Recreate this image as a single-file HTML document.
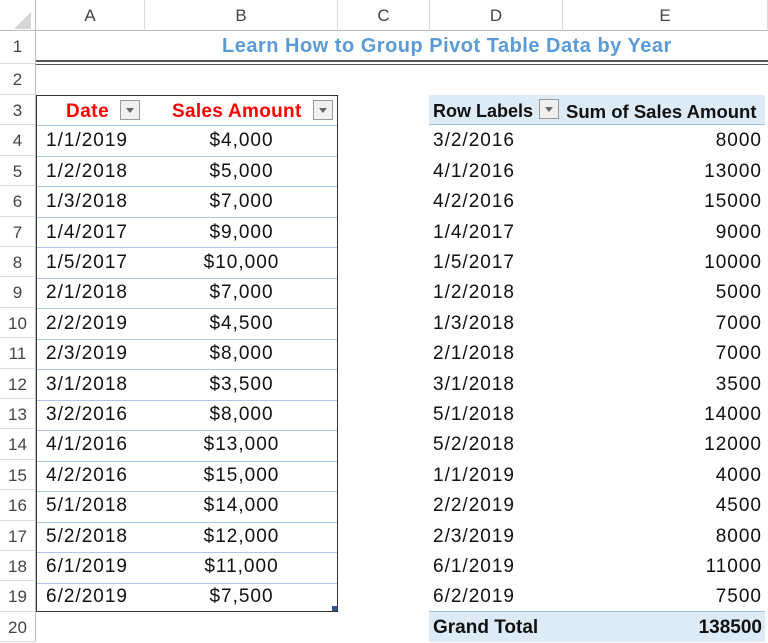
<!DOCTYPE html>
<html><head><meta charset="utf-8"><style>
body{margin:0;width:768px;height:642px;background:#fff;position:relative;overflow:hidden;font-family:"Liberation Sans",Arial,sans-serif;color:#111}
div{position:absolute;box-sizing:border-box}
.ch{top:0;height:31px;background:#fff;border-right:1px solid #dcdcdc;border-bottom:1px solid #bdbdbd;text-align:center;line-height:31px;font-size:17px;color:#444}
.rh{left:0;width:36px;border-right:1px solid #bdbdbd;border-bottom:1px solid #dcdcdc;text-align:center;font-size:17px;color:#444;height:30.4px;line-height:31px}
.c{font-size:19px;letter-spacing:1px;height:30.4px;line-height:31px;white-space:nowrap}
.sep{height:1px;background:#a9c7ea}
.dd{width:20px;height:20px;border:1px solid #9a9a9a;background:#f0f0f0}
.dd:after{content:"";position:absolute;left:5px;top:7px;border-left:4px solid transparent;border-right:4px solid transparent;border-top:5px solid #666}
</style></head><body>
<div style="left:0;top:0;width:36px;height:31px;border-right:1px solid #bdbdbd;border-bottom:1px solid #bdbdbd"></div>
<div style="left:14px;top:12px;width:0;height:0;border-left:17px solid transparent;border-bottom:17px solid #d6d6d6"></div>
<div class="ch" style="left:36px;width:109px">A</div>
<div class="ch" style="left:145px;width:193px">B</div>
<div class="ch" style="left:338px;width:92px">C</div>
<div class="ch" style="left:430px;width:133px">D</div>
<div class="ch" style="left:563px;width:205px">E</div>

<div class="rh" style="top:31px;height:33px">1</div>
<div class="rh" style="top:64px;height:31px">2</div>
<div class="rh" style="top:95px">3</div>
<div class="rh" style="top:125.4px">4</div>
<div class="rh" style="top:155.8px">5</div>
<div class="rh" style="top:186.2px">6</div>
<div class="rh" style="top:216.6px">7</div>
<div class="rh" style="top:247px">8</div>
<div class="rh" style="top:277.4px">9</div>
<div class="rh" style="top:307.8px">10</div>
<div class="rh" style="top:338.2px">11</div>
<div class="rh" style="top:368.6px">12</div>
<div class="rh" style="top:399px">13</div>
<div class="rh" style="top:429.4px">14</div>
<div class="rh" style="top:459.8px">15</div>
<div class="rh" style="top:490.2px">16</div>
<div class="rh" style="top:520.6px">17</div>
<div class="rh" style="top:551px">18</div>
<div class="rh" style="top:581.4px">19</div>
<div class="rh" style="top:611.8px">20</div>

<div style="left:222px;top:31px;width:460px;height:31px;line-height:31px;font-size:20px;letter-spacing:0.5px;font-weight:bold;color:#5b9bd5;white-space:nowrap">Learn How to Group Pivot Table Data by Year</div>
<div style="left:36px;top:60px;width:732px;height:5px;border-top:2px solid #555;border-bottom:1px solid #555"></div>

<!-- left table -->
<div style="left:36px;top:95px;width:302px;height:517px;border:1.5px solid #333"></div>
<div class="c" style="left:66px;top:96px;color:#f00;font-weight:bold;letter-spacing:0.5px">Date</div>
<div class="dd" style="left:120px;top:100px"></div>
<div class="c" style="left:172px;top:96px;color:#f00;font-weight:bold;letter-spacing:0.3px">Sales Amount</div>
<div class="dd" style="left:313px;top:100px"></div>
<div class="sep" style="left:37px;top:125px;width:300px"></div>
<div class="sep" style="left:37px;top:155.5px;width:300px"></div>
<div class="sep" style="left:37px;top:186px;width:300px"></div>
<div class="sep" style="left:37px;top:216.5px;width:300px"></div>
<div class="sep" style="left:37px;top:247px;width:300px"></div>
<div class="sep" style="left:37px;top:277.5px;width:300px"></div>
<div class="sep" style="left:37px;top:308px;width:300px"></div>
<div class="sep" style="left:37px;top:338.5px;width:300px"></div>
<div class="sep" style="left:37px;top:369px;width:300px"></div>
<div class="sep" style="left:37px;top:399.5px;width:300px"></div>
<div class="sep" style="left:37px;top:430px;width:300px"></div>
<div class="sep" style="left:37px;top:460.5px;width:300px"></div>
<div class="sep" style="left:37px;top:491px;width:300px"></div>
<div class="sep" style="left:37px;top:521.5px;width:300px"></div>
<div class="sep" style="left:37px;top:552px;width:300px"></div>
<div class="sep" style="left:37px;top:582.5px;width:300px"></div>
<div style="left:332px;top:606px;width:5px;height:5px;background:#2f5597"></div>

<div class="c" style="left:46px;top:125.4px">1/1/2019</div><div class="c" style="left:145px;width:193px;text-align:center;top:125.4px">$4,000</div>
<div class="c" style="left:46px;top:155.8px">1/2/2018</div><div class="c" style="left:145px;width:193px;text-align:center;top:155.8px">$5,000</div>
<div class="c" style="left:46px;top:186.2px">1/3/2018</div><div class="c" style="left:145px;width:193px;text-align:center;top:186.2px">$7,000</div>
<div class="c" style="left:46px;top:216.6px">1/4/2017</div><div class="c" style="left:145px;width:193px;text-align:center;top:216.6px">$9,000</div>
<div class="c" style="left:46px;top:247px">1/5/2017</div><div class="c" style="left:145px;width:193px;text-align:center;top:247px">$10,000</div>
<div class="c" style="left:46px;top:277.4px">2/1/2018</div><div class="c" style="left:145px;width:193px;text-align:center;top:277.4px">$7,000</div>
<div class="c" style="left:46px;top:307.8px">2/2/2019</div><div class="c" style="left:145px;width:193px;text-align:center;top:307.8px">$4,500</div>
<div class="c" style="left:46px;top:338.2px">2/3/2019</div><div class="c" style="left:145px;width:193px;text-align:center;top:338.2px">$8,000</div>
<div class="c" style="left:46px;top:368.6px">3/1/2018</div><div class="c" style="left:145px;width:193px;text-align:center;top:368.6px">$3,500</div>
<div class="c" style="left:46px;top:399px">3/2/2016</div><div class="c" style="left:145px;width:193px;text-align:center;top:399px">$8,000</div>
<div class="c" style="left:46px;top:429.4px">4/1/2016</div><div class="c" style="left:145px;width:193px;text-align:center;top:429.4px">$13,000</div>
<div class="c" style="left:46px;top:459.8px">4/2/2016</div><div class="c" style="left:145px;width:193px;text-align:center;top:459.8px">$15,000</div>
<div class="c" style="left:46px;top:490.2px">5/1/2018</div><div class="c" style="left:145px;width:193px;text-align:center;top:490.2px">$14,000</div>
<div class="c" style="left:46px;top:520.6px">5/2/2018</div><div class="c" style="left:145px;width:193px;text-align:center;top:520.6px">$12,000</div>
<div class="c" style="left:46px;top:551px">6/1/2019</div><div class="c" style="left:145px;width:193px;text-align:center;top:551px">$11,000</div>
<div class="c" style="left:46px;top:581.4px">6/2/2019</div><div class="c" style="left:145px;width:193px;text-align:center;top:581.4px">$7,500</div>

<!-- pivot -->
<div style="left:429px;top:95px;width:336px;height:30px;background:#ddebf7;border-bottom:1px solid #9bc2e6"></div>
<div class="c" style="left:433px;top:96px;font-weight:bold;font-size:18px;letter-spacing:0">Row Labels</div>
<div class="dd" style="left:539px;top:99px"></div>
<div class="c" style="left:566px;top:96px;font-weight:bold;font-size:18.5px;letter-spacing:0">Sum of Sales Amount</div>
<div style="left:429px;top:611px;width:336px;height:31px;background:#ddebf7;border-top:1px solid #9bc2e6"></div>
<div class="c" style="left:433px;top:612px;font-weight:bold;letter-spacing:0">Grand Total</div>
<div class="c" style="left:563px;width:199px;text-align:right;top:612px;font-weight:bold;letter-spacing:0">138500</div>

<div class="c" style="left:433px;top:125.4px">3/2/2016</div><div class="c" style="left:563px;width:199px;text-align:right;top:125.4px">8000</div>
<div class="c" style="left:433px;top:155.8px">4/1/2016</div><div class="c" style="left:563px;width:199px;text-align:right;top:155.8px">13000</div>
<div class="c" style="left:433px;top:186.2px">4/2/2016</div><div class="c" style="left:563px;width:199px;text-align:right;top:186.2px">15000</div>
<div class="c" style="left:433px;top:216.6px">1/4/2017</div><div class="c" style="left:563px;width:199px;text-align:right;top:216.6px">9000</div>
<div class="c" style="left:433px;top:247px">1/5/2017</div><div class="c" style="left:563px;width:199px;text-align:right;top:247px">10000</div>
<div class="c" style="left:433px;top:277.4px">1/2/2018</div><div class="c" style="left:563px;width:199px;text-align:right;top:277.4px">5000</div>
<div class="c" style="left:433px;top:307.8px">1/3/2018</div><div class="c" style="left:563px;width:199px;text-align:right;top:307.8px">7000</div>
<div class="c" style="left:433px;top:338.2px">2/1/2018</div><div class="c" style="left:563px;width:199px;text-align:right;top:338.2px">7000</div>
<div class="c" style="left:433px;top:368.6px">3/1/2018</div><div class="c" style="left:563px;width:199px;text-align:right;top:368.6px">3500</div>
<div class="c" style="left:433px;top:399px">5/1/2018</div><div class="c" style="left:563px;width:199px;text-align:right;top:399px">14000</div>
<div class="c" style="left:433px;top:429.4px">5/2/2018</div><div class="c" style="left:563px;width:199px;text-align:right;top:429.4px">12000</div>
<div class="c" style="left:433px;top:459.8px">1/1/2019</div><div class="c" style="left:563px;width:199px;text-align:right;top:459.8px">4000</div>
<div class="c" style="left:433px;top:490.2px">2/2/2019</div><div class="c" style="left:563px;width:199px;text-align:right;top:490.2px">4500</div>
<div class="c" style="left:433px;top:520.6px">2/3/2019</div><div class="c" style="left:563px;width:199px;text-align:right;top:520.6px">8000</div>
<div class="c" style="left:433px;top:551px">6/1/2019</div><div class="c" style="left:563px;width:199px;text-align:right;top:551px">11000</div>
<div class="c" style="left:433px;top:581.4px">6/2/2019</div><div class="c" style="left:563px;width:199px;text-align:right;top:581.4px">7500</div>
</body></html>
